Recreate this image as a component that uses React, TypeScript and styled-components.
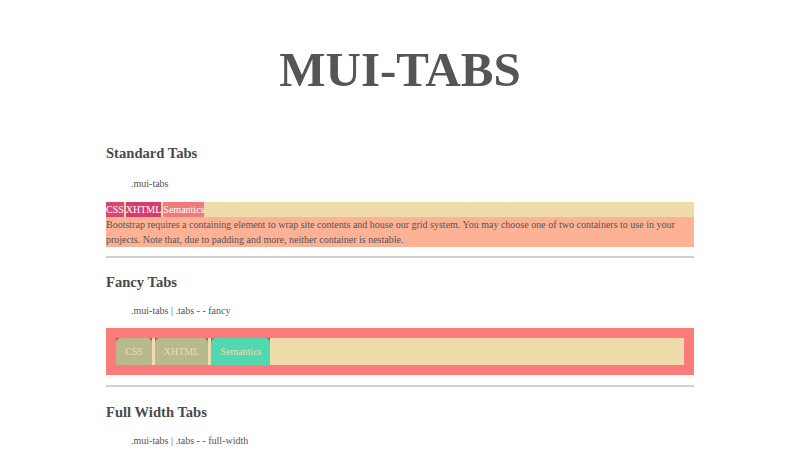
import React from "react";
import styled, { createGlobalStyle } from "styled-components";

const Global = createGlobalStyle`
  html, body { margin: 0; padding: 0; background: #ffffff; }
  body { font-family: "Liberation Serif", "Times New Roman", serif; color: #555555; }
`;

const Page = styled.div`
  width: 588px;
  margin: 0 auto;
  padding-top: 40px;
`;

const Title = styled.h1`
  margin: 0 0 44px;
  font-size: 49px;
  line-height: 60px;
  font-weight: 700;
  text-align: center;
  color: #555555;
`;

const Section = styled.section`
  display: flex;
  flex-direction: column;
`;

const Heading = styled.h2`
  margin: 0;
  font-size: 14.6px;
  line-height: 18px;
  font-weight: 700;
  color: #4a4a4a;
`;

const Selector = styled.div<{ $top?: number }>`
  margin: ${(p) => p.$top ?? 14}px 0 0 25px;
  font-size: 10px;
  line-height: 12px;
  color: #555555;
`;

const Rule = styled.hr<{ $top?: number; $bottom?: number }>`
  width: 100%;
  margin: ${(p) => p.$top ?? 10}px 0 ${(p) => p.$bottom ?? 16}px;
  border: 0;
  height: 2px;
  background: #cfcfcf;
`;

/* Standard tabs */
const StdBar = styled.div`
  margin-top: 12px;
  display: flex;
  gap: 2px;
  background: #f0dcab;
  height: 15px;
`;

const StdTab = styled.span<{ $bg: string }>`
  background: ${(p) => p.$bg};
  color: #ffffff;
  font-size: 10px;
  line-height: 15px;
  white-space: nowrap;
`;

const StdPanel = styled.div`
  background: #fdb195;
  color: #555555;
  font-size: 10px;
  line-height: 15px;
`;

/* Fancy tabs */
const FancyBox = styled.div`
  margin-top: 11px;
  background: #fe7b7b;
  padding: 10px;
`;

const FancyBar = styled.div`
  display: flex;
  gap: 3px;
  background: #f0dcab;
  height: 27px;
`;

const FancySlot = styled.div`
  background: #c2514f;
  display: flex;
`;

const FancyTab = styled.span<{ $active?: boolean }>`
  background: ${(p) => (p.$active ? "#52d8b0" : "#b7b98e")};
  color: #efdca8;
  font-size: 10px;
  line-height: 27px;
  padding: 0 9px;
  border-radius: 5px 5px 0 0;
  white-space: nowrap;
`;

export default function App() {
  return (
    <>
      <Global />
      <Page>
        <Title>MUI-TABS</Title>
        <Section>
          <Heading>Standard Tabs</Heading>
          <Selector $top={16}>.mui-tabs</Selector>
          <StdBar>
            <StdTab $bg="#d84872">CSS</StdTab>
            <StdTab $bg="#d43d6c">XHTML</StdTab>
            <StdTab $bg="#f27a7d">Semantics</StdTab>
          </StdBar>
          <StdPanel>
            Bootstrap requires a containing element to wrap site contents and house our grid system. You may choose one of two containers to use in your projects. Note that, due to padding and more, neither container is nestable.
          </StdPanel>
          <Rule $top={9} $bottom={15} />
        </Section>
        <Section>
          <Heading>Fancy Tabs</Heading>
          <Selector>.mui-tabs | .tabs - - fancy</Selector>
          <FancyBox>
            <FancyBar>
              <FancySlot><FancyTab>CSS</FancyTab></FancySlot>
              <FancySlot><FancyTab>XHTML</FancyTab></FancySlot>
              <FancySlot><FancyTab $active>Semantics</FancyTab></FancySlot>
            </FancyBar>
          </FancyBox>
          <Rule />
        </Section>
        <Section>
          <Heading>Full Width Tabs</Heading>
          <Selector>.mui-tabs | .tabs - - full-width</Selector>
        </Section>
      </Page>
    </>
  );
}
